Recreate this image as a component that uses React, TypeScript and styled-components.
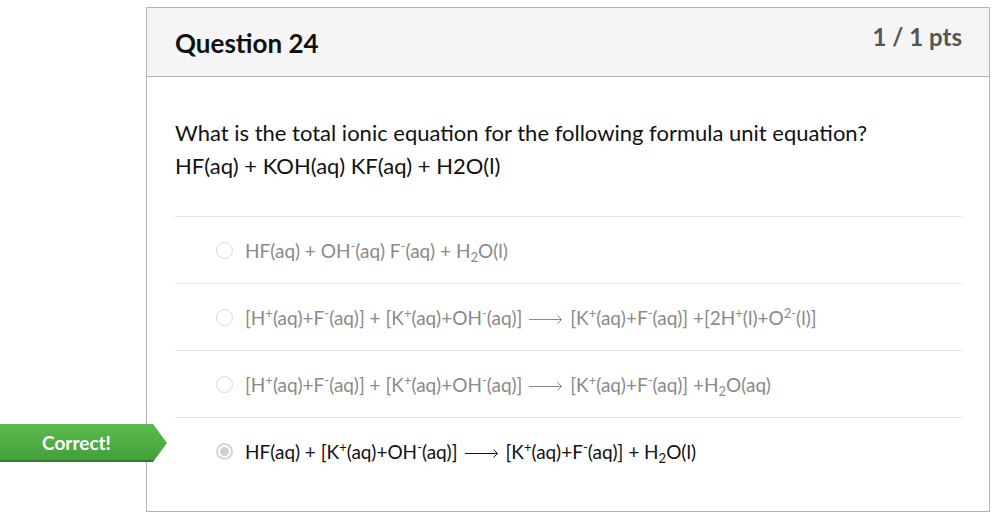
import React from 'react'
import styled, { createGlobalStyle } from 'styled-components';

const Global = createGlobalStyle`
  html, body {
    margin: 0;
    padding: 0;
    background: #fff;
    font-family: Lato, "Open Sans", sans-serif;
  }
`;

const Page = styled.div`
  position: relative;
  width: 998px;
  height: 530px;
  padding: 7px 0 0 146px;
  box-sizing: border-box;
`;

const Card = styled.div`
  width: 844px;
  height: 505px;
  box-sizing: border-box;
  border: 1px solid #b4b4b4;
  display: flex;
  flex-direction: column;
`;

const Header = styled.div`
  height: 69px;
  box-sizing: border-box;
  background: #f5f5f5;
  border-bottom: 1px solid #b4b4b4;
  display: flex;
  justify-content: space-between;
  align-items: flex-start;
  padding: 0 27px 0 28px;
`;

const Title = styled.h2`
  margin: 19px 0 0;
  font-size: 26px;
  font-weight: 700;
  color: #111;
  line-height: 32px;
`;

const Points = styled.div`
  margin-top: 15px;
  font-size: 24px;
  font-weight: 700;
  color: #555;
  line-height: 28px;
`;

const Body = styled.div`
  padding: 39px 27px 0 28px;
`;

const Prompt = styled.p`
  margin: 0 0 34px;
  font-size: 22px;
  line-height: 33px;
  color: #111;
`;

const Answer = styled.div<{ $selected?: boolean }>`
  height: 67px;
  box-sizing: border-box;
  border-top: 1px solid #e4e4e4;
  display: flex;
  align-items: center;
  gap: 12px;
  padding-left: 41px;
  font-size: 19px;
  color: ${p => (p.$selected ? '#111' : '#8a8a8a')};
  sup, sub { font-size: 13px; line-height: 0; }
  sup { vertical-align: 7px; }
  sub { vertical-align: -4px; }
`;

const Radio = styled.span<{ $selected?: boolean }>`
  width: 17px;
  height: 17px;
  border-radius: 50%;
  box-sizing: border-box;
  border: ${p => (p.$selected ? '2px solid #d4d4d4' : '1px solid #d8d8d8')};
  background: #fff;
  flex-shrink: 0;
  display: flex;
  align-items: center;
  justify-content: center;
  &::after {
    content: '';
    width: 9px;
    height: 9px;
    border-radius: 50%;
    background: ${p => (p.$selected ? '#cfcfcf' : 'transparent')};
  }
`;

const ArrowIcon = styled.svg`
  width: 34px;
  height: 10px;
  margin: 0 7px 0 7px;
  vertical-align: 1px;
`;

const Arrow: React.FC = () => (
  <ArrowIcon viewBox="0 0 34 10">
    <path d="M0 5.5H32.5M28.5 1.5L32.5 5.5L28.5 9.5" fill="none" stroke="currentColor" strokeWidth="1" />
  </ArrowIcon>
);

const Flag = styled.div`
  position: absolute;
  left: 0;
  top: 424px;
  width: 153px;
  height: 38px;
  box-sizing: border-box;
  background: linear-gradient(#5bbb4e, #43a03a);
  border-bottom: 2px solid #317c2b;
  color: #fff;
  font-weight: 700;
  font-size: 19px;
  display: flex;
  align-items: center;
  justify-content: center;
  &::after {
    content: '';
    position: absolute;
    right: -14px;
    top: 0;
    width: 14px;
    height: 38px;
    background: linear-gradient(#5bbb4e, #43a03a);
    clip-path: polygon(0 0, 100% 50%, 0 100%);
  }
`;

const App: React.FC = () => {
  return (
    <Page>
      <Global />
      <Card>
        <Header>
          <Title>Question 24</Title>
          <Points>1 / 1 pts</Points>
        </Header>
        <Body>
          <Prompt>
            What is the total ionic equation for the following formula unit equation?
            <br />
            HF(aq) + KOH(aq) KF(aq) + H2O(l)
          </Prompt>
          <Answer>
            <Radio />
            <span>HF(aq) + OH<sup>-</sup>(aq) F<sup>-</sup>(aq) + H<sub>2</sub>O(l)</span>
          </Answer>
          <Answer>
            <Radio />
            <span>
              [H<sup>+</sup>(aq)+F<sup>-</sup>(aq)] + [K<sup>+</sup>(aq)+OH<sup>-</sup>(aq)]
              <Arrow />
              [K<sup>+</sup>(aq)+F<sup>-</sup>(aq)] +[2H<sup>+</sup>(l)+O<sup>2-</sup>(l)]
            </span>
          </Answer>
          <Answer>
            <Radio />
            <span>
              [H<sup>+</sup>(aq)+F<sup>-</sup>(aq)] + [K<sup>+</sup>(aq)+OH<sup>-</sup>(aq)]
              <Arrow />
              [K<sup>+</sup>(aq)+F<sup>-</sup>(aq)] +H<sub>2</sub>O(aq)
            </span>
          </Answer>
          <Answer $selected>
            <Radio $selected />
            <span>
              HF(aq) + [K<sup>+</sup>(aq)+OH<sup>-</sup>(aq)]
              <Arrow />
              [K<sup>+</sup>(aq)+F<sup>-</sup>(aq)] + H<sub>2</sub>O(l)
            </span>
          </Answer>
        </Body>
      </Card>
      <Flag>Correct!</Flag>
    </Page>
  )
};

export default App;
